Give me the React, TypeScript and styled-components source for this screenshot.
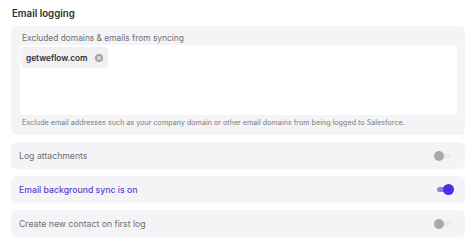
import styled, { createGlobalStyle } from "styled-components";

const GlobalStyle = createGlobalStyle`
  body {
    margin: 0;
    background: #ffffff;
    font-family: "Inter", "Noto Sans", sans-serif;
  }
`;

const Page = styled.div`
  width: 454px;
  padding: 5px 9px 0 11px;
`;

const Heading = styled.h2`
  margin: 0 0 3px 1px;
  font-size: 9.7px;
  line-height: 18px;
  font-weight: 600;
  color: #2f2f33;
`;

const Panel = styled.div`
  background: #f4f4f6;
  border-radius: 6px;
  padding: 5px 8px 6px 9px;
`;

const FieldLabel = styled.div`
  font-size: 8.4px;
  line-height: 14px;
  color: #6e6e73;
  padding-left: 2px;
`;

const EmailBox = styled.div`
  height: 70px;
  background: #ffffff;
  border-radius: 4px;
  padding: 2px 1px;
  box-sizing: border-box;
  display: flex;
  flex-wrap: wrap;
  align-content: flex-start;
  gap: 4px;
`;

const Chip = styled.span`
  display: inline-flex;
  align-items: center;
  gap: 7px;
  height: 21px;
  padding: 0 5px;
  background: #f1f1f3;
  border-radius: 4px;
  font-size: 8.3px;
  font-weight: 600;
  color: #2f2f33;
`;

const Hint = styled.p`
  margin: 2px 0 0 2px;
  font-size: 7.2px;
  line-height: 12px;
  color: #7a7a80;
`;

const List = styled.div`
  display: flex;
  flex-direction: column;
  gap: 7px;
  margin-top: 7px;
`;

const Row = styled.div`
  height: 27px;
  background: #f4f4f6;
  border-radius: 6px;
  display: flex;
  align-items: center;
  justify-content: space-between;
  padding: 0 11px 0 8px;
`;

const RowLabel = styled.span<{ $active?: boolean }>`
  font-size: 8.7px;
  font-weight: ${(p) => (p.$active ? 500 : 400)};
  color: ${(p) => (p.$active ? "#5a3fd6" : "#6e6e73")};
`;

const Toggle = styled.span<{ $on?: boolean }>`
  position: relative;
  width: 20px;
  height: 11px;
  flex: none;

  &::before {
    content: "";
    position: absolute;
    left: 3px;
    right: 3px;
    top: 3px;
    height: 5px;
    border-radius: 3px;
    background: ${(p) => (p.$on ? "#8f80e8" : "#ececef")};
  }

  &::after {
    content: "";
    position: absolute;
    top: ${(p) => (p.$on ? "0" : "0.5px")};
    left: ${(p) => (p.$on ? "9px" : "0")};
    width: ${(p) => (p.$on ? "11px" : "10px")};
    height: ${(p) => (p.$on ? "11px" : "10px")};
    border-radius: 50%;
    background: ${(p) => (p.$on ? "#4b31e2" : "#a9a9ad")};
  }
`;

const RemoveIcon = () => (
  <svg width="8" height="8" viewBox="0 0 10 10">
    <circle cx="5" cy="5" r="5" fill="#a3a3a8" />
    <path d="M3.3 3.3 L6.7 6.7 M6.7 3.3 L3.3 6.7" stroke="#f1f1f3" strokeWidth="1.3" strokeLinecap="round" />
  </svg>
);

const settings = [
  { label: "Log attachments", on: false },
  { label: "Email background sync is on", on: true },
  { label: "Create new contact on first log", on: false },
];

const App = () => {
  return (
    <>
      <GlobalStyle />
      <Page>
        <Heading>Email logging</Heading>
        <Panel>
          <FieldLabel>Excluded domains &amp; emails from syncing</FieldLabel>
          <EmailBox>
            <Chip>
              getweflow.com
              <RemoveIcon />
            </Chip>
          </EmailBox>
          <Hint>
            Exclude email addresses such as your company domain or other email domains from being logged to Salesforce.
          </Hint>
        </Panel>
        <List>
          {settings.map((s) => (
            <Row key={s.label}>
              <RowLabel $active={s.on}>{s.label}</RowLabel>
              <Toggle $on={s.on} />
            </Row>
          ))}
        </List>
      </Page>
    </>
  );
};

export default App;
